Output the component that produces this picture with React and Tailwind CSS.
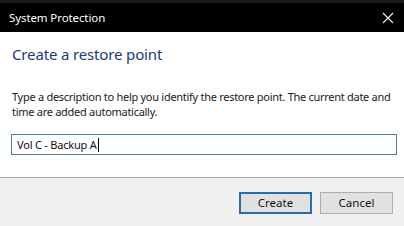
import React from "react";

export default function App() {
  return (
    <div
      className="w-[404px] h-[226px] flex flex-col bg-white overflow-hidden"
      style={{ fontFamily: '"Noto Sans", "Open Sans", sans-serif' }}
    >
      {/* Title bar */}
      <div className="h-[3px] bg-[#1c1c1c]" />
      <div className="h-[29px] bg-black flex items-center justify-between pl-[9px] pr-[8px]">
        <span className="text-white text-[11.5px] tracking-[-0.1px] leading-none">System Protection</span>
        <svg width="12" height="12" viewBox="0 0 12 12" className="mr-[2px]">
          <path d="M1 1L11 11M11 1L1 11" stroke="#e8e8e8" strokeWidth="1.2" />
        </svg>
      </div>

      {/* Content */}
      <div className="flex-1 flex flex-col pl-[11px]">
        <h1 className="text-[#1e3a78] text-[15px] tracking-[-0.15px] leading-none mt-[15px] pl-[1px]">
          Create a restore point
        </h1>
        <p className="w-[392px] text-[#1a1a1a] text-[11px] tracking-[-0.28px] leading-[15px] mt-[27px] pl-[1px]">
          Type a description to help you identify the restore point. The current date and
          <br />
          time are added automatically.
        </p>
        <div className="mt-[15px] w-[386px] h-[21px] border border-[#4f7c9c] flex items-center pl-[5px]">
          <span className="text-[#111] text-[11px] tracking-[-0.2px] leading-none">Vol C - Backup A</span>
          <span className="w-px h-[14px] bg-black ml-[1px]" />
        </div>
      </div>

      {/* Footer */}
      <div className="h-[49px] bg-[#f0f0f0] border-t border-[#a8a8a8] flex justify-end items-start pt-[14px] pr-[11px] gap-[8px]">
        <button className="w-[73px] h-[22px] bg-[#e1e1e1] border-2 border-[#2a6cb0] text-[#111] text-[11.5px] leading-none">
          Create
        </button>
        <button className="w-[73px] h-[22px] bg-[#e1e1e1] border border-[#adadad] text-[#111] text-[11.5px] leading-none">
          Cancel
        </button>
      </div>
    </div>
  );
}
